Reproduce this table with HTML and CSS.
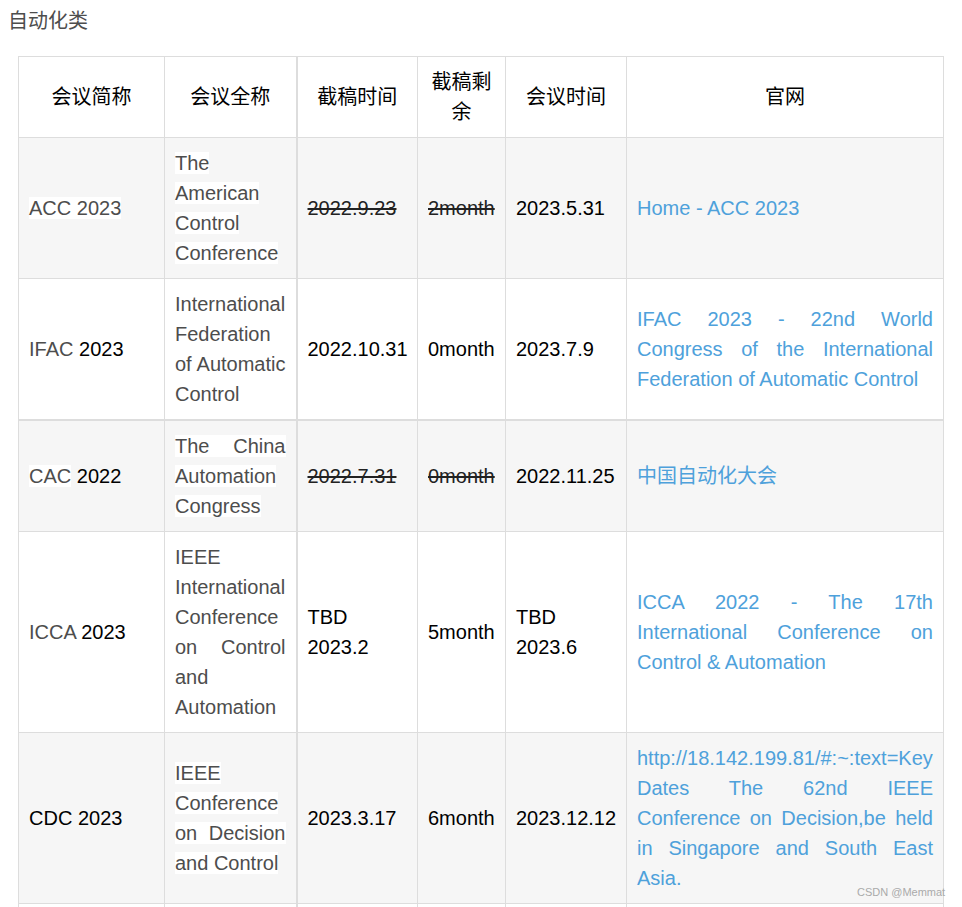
FILE: index.html
```html
<!DOCTYPE html>
<html lang="zh-CN">
<head>
<meta charset="utf-8">
<title>自动化类</title>
<link rel="stylesheet" href="styles.css">
</head>
<body>
<div class="page">
  <p class="title">自动化类</p>
  <table class="conf">
    <colgroup>
      <col class="c1"><col class="c2"><col class="c3"><col class="c4"><col class="c5"><col class="c6">
    </colgroup>
    <thead>
      <tr>
        <th>会议简称</th>
        <th class="thick">会议全称</th>
        <th>截稿时间</th>
        <th>截稿剩余</th>
        <th>会议时间</th>
        <th>官网</th>
      </tr>
    </thead>
    <tbody>
      <tr class="alt">
        <td><span class="hl">ACC 2023</span></td>
        <td class="thick"><span class="hl">The American Control Conference</span></td>
        <td class="nw"><s class="del">2022.9.23</s></td>
        <td class="nw"><s class="del">2month</s></td>
        <td class="nw">2023.5.31</td>
        <td><a class="link" href="#">Home - ACC 2023</a></td>
      </tr>
      <tr class="thickrow">
        <td><span class="g">IFAC</span> 2023</td>
        <td class="thick"><span class="g">International Federation of Automatic Control</span></td>
        <td class="nw">2022.10.31</td>
        <td class="nw">0month</td>
        <td class="nw">2023.7.9</td>
        <td><a class="link" href="#">IFAC 2023 - 22nd World Congress of the International Federation of Automatic Control</a></td>
      </tr>
      <tr class="alt">
        <td><span class="hl">CAC</span> 2022</td>
        <td class="thick"><span class="hl">The China Automation Congress</span></td>
        <td class="nw"><s class="del">2022.7.31</s></td>
        <td class="nw"><s class="del">0month</s></td>
        <td class="nw">2022.11.25</td>
        <td><a class="link" href="#">中国自动化大会</a></td>
      </tr>
      <tr>
        <td><span class="g">ICCA</span> 2023</td>
        <td class="thick"><span class="g">IEEE International Conference on Control and Automation</span></td>
        <td class="nw">TBD<br>2023.2</td>
        <td class="nw">5month</td>
        <td class="nw">TBD<br>2023.6</td>
        <td><a class="link" href="#">ICCA 2022 - The 17th International Conference on Control &amp; Automation</a></td>
      </tr>
      <tr class="alt">
        <td>CDC 2023</td>
        <td class="thick"><span class="hl">IEEE Conference on Decision and Control</span></td>
        <td class="nw">2023.3.17</td>
        <td class="nw">6month</td>
        <td class="nw">2023.12.12</td>
        <td><a class="link" href="#">http://18.142.199.81/#:~:text=Key Dates The 62nd IEEE Conference on Decision,be held in Singapore and South East Asia.</a></td>
      </tr>
      <tr class="empty">
        <td></td><td class="thick"></td><td></td><td></td><td></td><td></td>
      </tr>
    </tbody>
  </table>
  <div class="watermark">CSDN @Memmat</div>
</div>
</body>
</html>
```

FILE: styles.css
```css
html, body {
  margin: 0;
  padding: 0;
  background: #fff;
}

body {
  font-family: "Liberation Sans", Arial, "Noto Sans CJK SC", sans-serif;
  font-size: 20px;
  line-height: 30px;
  color: #000;
}

.page {
  position: relative;
  padding: 6px 8px 0 8px;
  height: 901px;
  overflow: hidden;
}

.title {
  margin: 0;
  color: #4d4d4d;
  font-size: 20px;
  line-height: 30px;
}

.conf {
  margin: 20px 0 0 10px;
  border-collapse: collapse;
  table-layout: fixed;
  width: 925px;
}

.c1 { width: 146px; }
.c2 { width: 132px; }
.c3 { width: 121px; }
.c4 { width: 88px; }
.c5 { width: 121px; }
.c6 { width: 317px; }

.conf th,
.conf td {
  border: 1px solid #ddd;
  padding: 10px 10px;
  vertical-align: middle;
}

.conf th {
  font-weight: normal;
  text-align: center;
  color: #000;
}

.conf td {
  text-align: justify;
}

.conf td.nw {
  white-space: nowrap;
}

.conf .thick {
  border-right: 2px solid #ddd;
}

.conf tr.thickrow td {
  border-bottom: 2px solid #ddd;
}

.conf tr.alt {
  background: #f6f6f6;
}

.conf tr.empty td {
  height: 40px;
  padding: 0;
}

.hl {
  background: #fff;
  color: #4d4d4d;
}

.g {
  color: #4d4d4d;
}

.del {
  color: #222;
}

.link {
  color: #4ea1db;
  text-decoration: none;
}

.watermark {
  position: absolute;
  left: 857px;
  top: 885px;
  font-size: 11px;
  line-height: 14px;
  color: #aaa;
  white-space: nowrap;
}
```
